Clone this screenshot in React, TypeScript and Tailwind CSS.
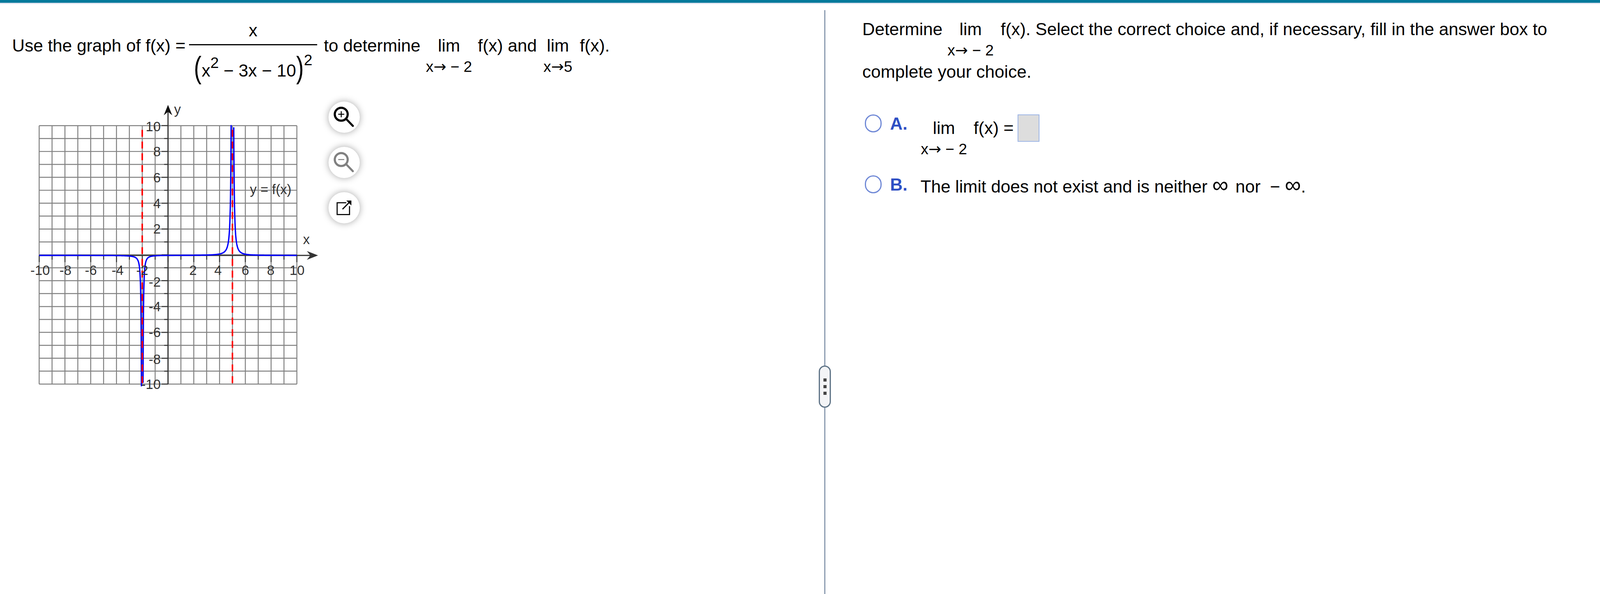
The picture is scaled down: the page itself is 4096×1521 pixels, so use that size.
const xTicks = [
  { t: "-10", x: 105 },
  { t: "-8", x: 237 },
  { t: "-6", x: 369 },
  { t: "-4", x: 508 },
  { t: "-2", x: 636 },
  { t: "2", x: 900 },
  { t: "4", x: 1030 },
  { t: "6", x: 1172 },
  { t: "8", x: 1304 },
  { t: "10", x: 1441 },
];

const yTicks = [
  { t: "10", y: 196 },
  { t: "8", y: 326 },
  { t: "6", y: 464 },
  { t: "4", y: 597 },
  { t: "2", y: 730 },
  { t: "-2", y: 1005 },
  { t: "-4", y: 1134 },
  { t: "-6", y: 1267 },
  { t: "-8", y: 1407 },
  { t: "-10", y: 1537 },
];

const units = Array.from({ length: 21 }, (_, i) => i);

// f(x) = x / (x^2 - 3x - 10)^2, clipped at y = +-10
function curve(from: number, to: number) {
  let d = "";
  const step = (to - from) / 1500;
  for (let i = 0; i <= 1500; i++) {
    const x = from + step * i;
    const y = x / Math.pow(x * x - 3 * x - 10, 2);
    d += `${i === 0 ? "M" : "L"}${(770 + 67 * x).toFixed(1)} ${(843 - 67.2 * y).toFixed(1)}`;
  }
  return d;
}

const dl = Math.sqrt(2 / 490);
const dr = Math.sqrt(5 / 490);

function Graph() {
  return (
    <svg viewBox="0 0 1568 1568" className="w-[772px] h-[772px] shrink-0">
      {units.map((i) => (
        <g key={i} stroke="#808080" strokeWidth="5">
          <line x1={100 + i * 67} x2={100 + i * 67} y1="168" y2="1512" />
          <line x1="100" x2="1440" y1={168 + i * 67.2} y2={168 + i * 67.2} />
        </g>
      ))}
      {units.map((i) => (
        <g key={i} stroke="#333333" strokeWidth="5">
          <line x1={100 + i * 67} x2={100 + i * 67} y1="843" y2={i % 2 === 0 ? 878 : 865} />
          <line x1={i % 2 === 0 ? 737 : 750} x2="770" y1={168 + i * 67.2} y2={168 + i * 67.2} />
        </g>
      ))}
      <line x1="770" x2="770" y1="90" y2="1512" stroke="#333333" strokeWidth="6" />
      <line x1="100" x2="1515" y1="843" y2="843" stroke="#333333" strokeWidth="6" />
      <path d="M770 60L748 114L770 96L792 114Z" fill="#111111" />
      <path d="M1550 843L1492 820L1510 843L1492 866Z" fill="#333333" />
      <g fill="none" stroke="#0000ff" strokeWidth="7">
        <path d={curve(-10, -2 - dl)} />
        <path d={curve(-2 + dl, 5 - dr)} />
        <path d={curve(5 + dr, 10)} />
      </g>
      <g stroke="#ff0000" strokeWidth="8" strokeDasharray="36 25">
        <line x1="636" x2="636" y1="190" y2="1512" />
        <line x1="1105" x2="1105" y1="190" y2="1512" />
      </g>
      <g fill="#333333" fontSize="70" textAnchor="middle">
        {xTicks.map((l) => (
          <text key={l.t} x={l.x} y="945">
            {l.t}
          </text>
        ))}
      </g>
      <g fill="#333333" fontSize="70" textAnchor="end">
        {yTicks.map((l) => (
          <text key={l.t} x="732" y={l.y}>
            {l.t}
          </text>
        ))}
      </g>
      <g fill="#333333" fontSize="70">
        <text x="802" y="108">y</text>
        <text x="1472" y="784">x</text>
        <text x="1196" y="524">y = f(x)</text>
      </g>
    </svg>
  );
}

function RoundButton({ children }: { children: React.ReactNode }) {
  return (
    <div className="w-[80px] h-[80px] rounded-full bg-white shadow-[0_0_18px_rgba(0,0,0,0.35)] flex items-center justify-center">
      {children}
    </div>
  );
}

function Magnifier({ color, plus }: { color: string; plus?: boolean }) {
  return (
    <svg viewBox="0 0 290 290" className="w-[80px] h-[80px]" fill="none" stroke={color}>
      <circle cx="118" cy="118" r="60" strokeWidth="20" />
      <line x1="90" x2="146" y1="118" y2="118" strokeWidth="9" />
      {plus && <line x1="118" x2="118" y1="90" y2="146" strokeWidth="9" />}
      <line x1="168" y1="166" x2="226" y2="226" strokeWidth="19" strokeLinecap="round" />
    </svg>
  );
}

function ExternalIcon() {
  return (
    <svg viewBox="0 0 290 290" className="w-[80px] h-[80px]" fill="none" stroke="#000000">
      <path d="M165 98H80V208H195V130" strokeWidth="10" />
      <line x1="130" y1="158" x2="190" y2="98" strokeWidth="11" />
      <path d="M165 78H212V123Z" fill="#000000" stroke="none" />
    </svg>
  );
}

function Lim({ target, className }: { target: string; className?: string }) {
  return (
    <div className={`flex flex-col items-center ${className ?? ""}`}>
      <span>lim</span>
      <span className="mt-[9px] text-[39px] leading-[42px] whitespace-pre">
        x<span className="font-['DejaVu_Sans',sans-serif]">→</span>
        {target}
      </span>
    </div>
  );
}

function Fraction() {
  return (
    <div className="flex flex-col w-[328px] items-center">
      <span>x</span>
      <div className="w-full h-[3px] bg-black mt-[11px]" />
      <div className="mt-[29px] h-[48px] flex items-baseline whitespace-pre">
        <span className="text-[78px] leading-[48px] -mx-[3px] scale-x-75 translate-y-[4px]">(</span>
        <span>x</span>
        <span className="text-[39px] leading-[48px] -translate-y-[22px]">2</span>
        <span> − 3x − 10</span>
        <span className="text-[78px] leading-[48px] -mx-[3px] scale-x-75 translate-y-[4px]">)</span>
        <span className="text-[39px] leading-[48px] -translate-y-[29px]">2</span>
      </div>
    </div>
  );
}

function Radio() {
  return (
    <div className="ml-[6px] w-[43px] h-[46px] rounded-full border-[3.5px] border-[#6f88d6] bg-white shrink-0" />
  );
}

export default function App() {
  return (
    <div className="w-[4096px] h-[1521px] flex flex-col bg-white text-black text-[44.5px] leading-[48px] font-['Liberation_Sans',Arial,sans-serif] overflow-hidden">
      <div className="h-[7px] bg-[#027a9b] shrink-0" />
      <div className="h-[4px] bg-gradient-to-b from-[#c5cde2] to-white shrink-0" />
      <div className="relative flex flex-1 min-h-0">
        <div className="w-[2110px] shrink-0 pt-[43px]">
          <div className="flex items-start pl-[31px] whitespace-pre">
            <span className="mt-[38.5px]">Use the graph of f(x) =</span>
            <div className="ml-[9px]">
              <Fraction />
            </div>
            <span className="mt-[38.5px] ml-[17px]">to determine</span>
            <Lim target=" − 2" className="mt-[38.5px] ml-[14px] w-[118px]" />
            <span className="mt-[38.5px] ml-[15px]">f(x) and</span>
            <Lim target="5" className="mt-[38.5px] ml-[11px] w-[86px]" />
            <span className="mt-[38.5px] ml-[13px]">f(x).</span>
          </div>
          <div className="flex items-start pl-[51px] mt-[46px]">
            <Graph />
            <div className="ml-[18px] mt-[21px] flex flex-col gap-[36px]">
              <RoundButton>
                <Magnifier color="#000000" plus />
              </RoundButton>
              <RoundButton>
                <Magnifier color="#808080" />
              </RoundButton>
              <RoundButton>
                <ExternalIcon />
              </RoundButton>
            </div>
          </div>
        </div>

        <div className="flex-1 mt-[15px] border-l-[3px] border-[#8a9bb0] pl-[94.5px] pt-[24.5px] whitespace-pre">
          <div className="flex items-start">
            <span>Determine</span>
            <Lim target=" − 2" className="ml-[12px] w-[120px]" />
            <span className="ml-[17px]">f(x). Select the correct choice and, if necessary, fill in the answer box to</span>
          </div>
          <div className="mt-[10px]">complete your choice.</div>

          <div className="flex items-start mt-[85.5px]">
            <Radio />
            <span className="ml-[22px] font-bold text-[#2f4fc4]">A.</span>
            <Lim target=" − 2" className="ml-[33.5px] w-[120px] mt-[10.5px]" />
            <span className="ml-[16px] mt-[10.5px]">f(x) =</span>
            <div className="ml-[10px] w-[56px] h-[70px] bg-[#dddddd] border-[2.5px] border-[#9db5e5]" />
          </div>

          <div className="flex items-start mt-[46px]">
            <Radio />
            <span className="ml-[22px] font-bold text-[#2f4fc4]">B.</span>
            <div className="ml-[33.5px] flex items-baseline h-[48px]">
              <span>The limit does not exist and is neither </span>
              <span className="text-[58px] leading-[48px]">∞</span>
              <span className="ml-[18px]">nor</span>
              <span className="ml-[24px]">−</span>
              <span className="ml-[12px] text-[58px] leading-[48px]">∞</span>
              <span>.</span>
            </div>
          </div>
        </div>

        <div className="absolute left-[2096px] top-[925px] w-[31px] h-[108px] rounded-full border-[3px] border-[#5d7285] bg-[#f3f4f6] flex flex-col items-center justify-center gap-[9px]">
          <div className="w-[8px] h-[8px] bg-[#444444]" />
          <div className="w-[8px] h-[8px] bg-[#444444]" />
          <div className="w-[8px] h-[8px] bg-[#444444]" />
        </div>
      </div>
    </div>
  );
}
